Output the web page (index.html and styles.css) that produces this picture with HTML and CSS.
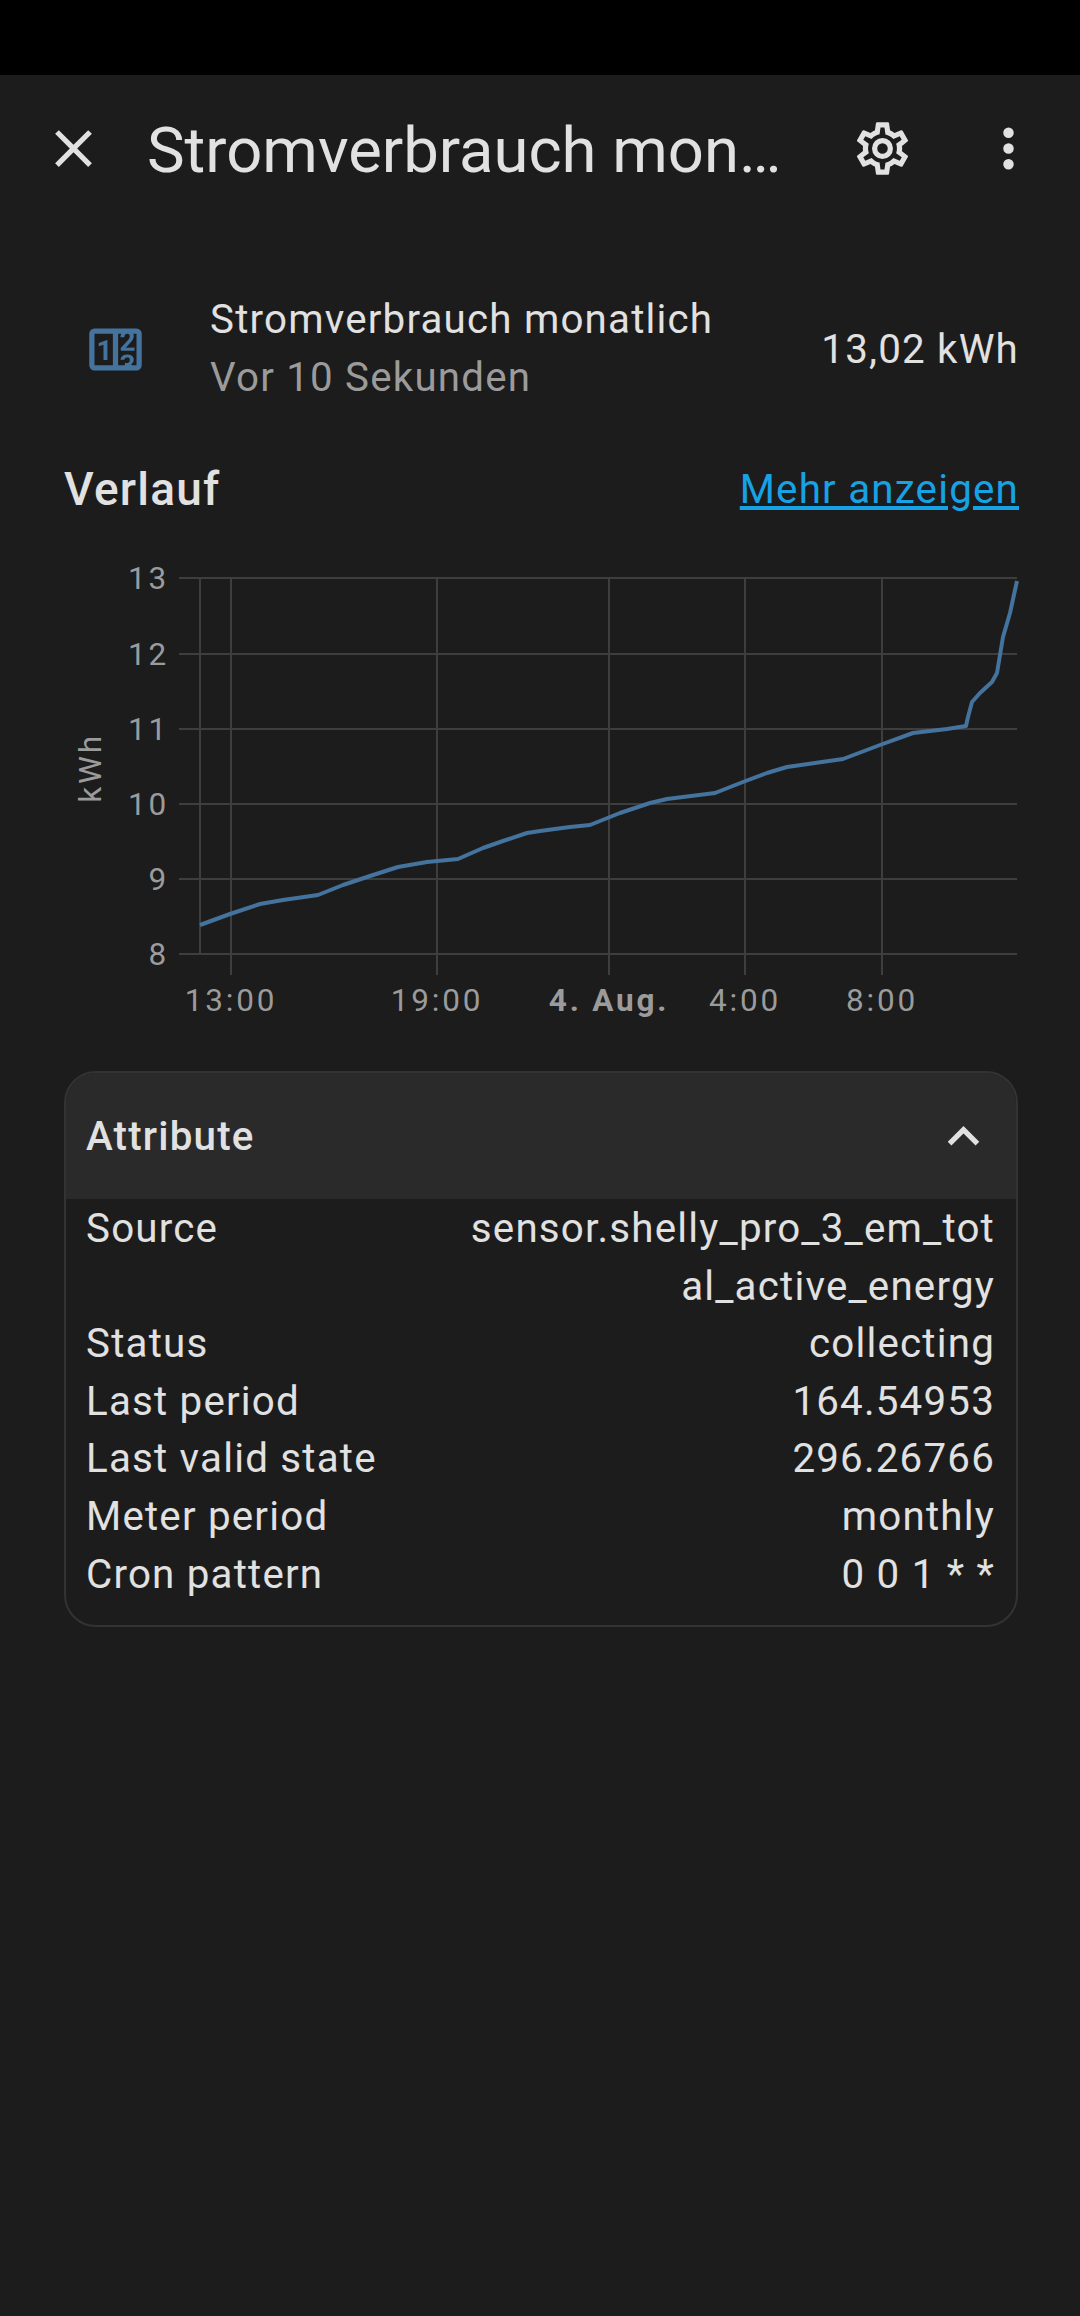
FILE: index.html
```html
<!DOCTYPE html>
<html lang="de">
<head>
<meta charset="utf-8">
<title>Stromverbrauch monatlich</title>
<link rel="stylesheet" href="styles.css">
</head>
<body>
<div class="status-bar"></div>

<header class="toolbar">
  <svg class="icon" viewBox="0 0 24 24"><path d="M19,6.41L17.59,5L12,10.59L6.41,5L5,6.41L10.59,12L5,17.59L6.41,19L12,13.41L17.59,19L19,17.59L13.41,12L19,6.41Z"/></svg>
  <h1 class="toolbar-title">Stromverbrauch monatlich</h1>
  <svg class="icon" viewBox="0 0 24 24"><path d="M12,8A4,4 0 0,1 16,12A4,4 0 0,1 12,16A4,4 0 0,1 8,12A4,4 0 0,1 12,8M12,10A2,2 0 0,0 10,12A2,2 0 0,0 12,14A2,2 0 0,0 14,12A2,2 0 0,0 12,10M10,22C9.75,22 9.54,21.82 9.5,21.58L9.13,18.93C8.5,18.68 7.96,18.34 7.44,17.94L4.95,18.95C4.73,19.03 4.46,18.95 4.34,18.73L2.34,15.27C2.21,15.05 2.27,14.78 2.46,14.63L4.57,12.97L4.5,12L4.57,11L2.46,9.37C2.27,9.22 2.21,8.95 2.34,8.73L4.34,5.27C4.46,5.05 4.73,4.96 4.95,5.05L7.44,6.05C7.96,5.66 8.5,5.32 9.13,5.07L9.5,2.42C9.54,2.18 9.75,2 10,2H14C14.25,2 14.46,2.18 14.5,2.42L14.87,5.07C15.5,5.32 16.04,5.66 16.56,6.05L19.05,5.05C19.27,4.96 19.54,5.05 19.66,5.27L21.66,8.73C21.79,8.95 21.73,9.22 21.54,9.37L19.43,11L19.5,12L19.43,13L21.54,14.63C21.73,14.78 21.79,15.05 21.66,15.27L19.66,18.73C19.54,18.95 19.27,19.04 19.05,18.95L16.56,17.95C16.04,18.34 15.5,18.68 14.87,18.93L14.5,21.58C14.46,21.82 14.25,22 14,22H10M11.25,4L10.88,6.61C9.68,6.86 8.62,7.5 7.85,8.39L5.44,7.35L4.69,8.65L6.8,10.2C6.4,11.37 6.4,12.64 6.8,13.8L4.68,15.36L5.43,16.66L7.86,15.62C8.63,16.5 9.68,17.14 10.87,17.38L11.24,20H12.76L13.13,17.39C14.32,17.14 15.37,16.5 16.14,15.62L18.57,16.66L19.32,15.36L17.2,13.81C17.6,12.64 17.6,11.37 17.2,10.2L19.31,8.65L18.56,7.35L16.15,8.39C15.38,7.5 14.32,6.86 13.12,6.62L12.75,4H11.25Z"/></svg>
  <svg class="icon dots-icon" viewBox="0 0 24 24"><path d="M12,16A2,2 0 0,1 14,18A2,2 0 0,1 12,20A2,2 0 0,1 10,18A2,2 0 0,1 12,16M12,10A2,2 0 0,1 14,12A2,2 0 0,1 12,14A2,2 0 0,1 10,12A2,2 0 0,1 12,10M12,4A2,2 0 0,1 14,6A2,2 0 0,1 12,8A2,2 0 0,1 10,6A2,2 0 0,1 12,4Z"/></svg>
</header>

<main class="content">
  <section class="entity">
    <svg class="icon entity-icon" viewBox="0 0 24 24"><path d="M4,4H20A2,2 0 0,1 22,6V18A2,2 0 0,1 20,20H4A2,2 0 0,1 2,18V6A2,2 0 0,1 4,4M4,6V18H11V6H4M20,18V6H18.76C19,6.54 18.95,7.07 18.95,7.13C18.88,7.8 18.41,8.5 18.24,8.75L15.91,11.3L19.23,11.28L19.24,12.5L14.04,12.47L14,11.47C14,11.47 17.05,8.24 17.2,7.95C17.34,7.67 17.91,6 16.5,6C15.27,6.05 15.41,7.3 15.41,7.3L13.87,7.31C13.87,7.31 13.88,6.65 14.25,6H13V18H15.58L15.57,17.14L16.54,17.13C16.54,17.13 17.45,16.97 17.46,16.08C17.5,15.08 16.65,15.08 16.5,15.08C16.37,15.08 15.43,15.13 15.43,15.95H13.91C13.91,15.95 13.95,13.89 16.5,13.89C19.1,13.89 18.96,15.91 18.96,15.91C18.96,15.91 19,17.16 17.85,17.63L18.37,18H20M8.92,16H7.42V10.2L5.62,10.76V9.53L8.76,8.41H8.92V16Z"/></svg>
    <div class="entity-text">
      <div class="entity-name">Stromverbrauch monatlich</div>
      <div class="entity-time">Vor 10 Sekunden</div>
    </div>
    <div class="entity-value">13,02 kWh</div>
  </section>

  <section class="history-head">
    <h2 class="history-title">Verlauf</h2>
    <a class="history-link" href="#">Mehr anzeigen</a>
  </section>

  <svg class="chart" viewBox="64 540 954 500">
    <g class="grid">
      <path d="M179 578H1017M179 654H1017M179 729H1017M179 804H1017M179 879H1017M179 954H1017"/>
      <path d="M200 578V954M231 578V975M437 578V975M609 578V975M745 578V975M882 578V975"/>
    </g>
    <g class="y-labels">
      <text x="169" y="589">13</text>
      <text x="169" y="665">12</text>
      <text x="169" y="740">11</text>
      <text x="169" y="815">10</text>
      <text x="169" y="890">9</text>
      <text x="169" y="965">8</text>
    </g>
    <text class="y-unit" transform="translate(101 768) rotate(-90)">kWh</text>
    <g class="x-labels">
      <text x="231" y="1011">13:00</text>
      <text x="437" y="1011">19:00</text>
      <text class="x-day" x="609" y="1011">4. Aug.</text>
      <text x="745" y="1011">4:00</text>
      <text x="882" y="1011">8:00</text>
    </g>
    <polyline class="chart-line" points="200,925 230,914 260,904 283,900 318,895 343,885 370,876 398,867 427,862 458,859 483,848 503,841 527,833 540,831 570,827 590,825 620,813 650,803 667,799 715,793 743,782 767,773 787,767 843,759 880,745 913,733 947,729 966,726 968,717 972,702 980,693 992,682 997,673 1003,637 1010,613 1017,581"/>
  </svg>

  <section class="attributes">
    <div class="attributes-head">
      <span>Attribute</span>
      <svg class="icon" viewBox="0 0 24 24"><path d="M7.41,15.41L12,10.83L16.59,15.41L18,14L12,8L6,14L7.41,15.41Z"/></svg>
    </div>
    <div class="attributes-body">
      <div class="attr-row"><span>Source</span><span class="attr-value">sensor.shelly_pro_3_em_total_active_energy</span></div>
      <div class="attr-row"><span>Status</span><span class="attr-value">collecting</span></div>
      <div class="attr-row"><span>Last period</span><span class="attr-value">164.54953</span></div>
      <div class="attr-row"><span>Last valid state</span><span class="attr-value">296.26766</span></div>
      <div class="attr-row"><span>Meter period</span><span class="attr-value">monthly</span></div>
      <div class="attr-row"><span>Cron pattern</span><span class="attr-value">0 0 1 * *</span></div>
    </div>
  </section>
</main>
</body>
</html>
```

FILE: styles.css
```css
* {
  box-sizing: border-box;
}

body {
  margin: 0;
  min-height: 100vh;
  background-color: #1c1c1c;
  color: #e1e1e1;
  font-family: Roboto, "Noto Sans", sans-serif;
}

.status-bar {
  height: 75px;
  background-color: #000;
}

.icon {
  display: block;
  flex: none;
  width: 63px;
  height: 63px;
  fill: #e1e1e1;
}

.toolbar {
  display: flex;
  align-items: center;
  gap: 62px;
  height: 146px;
  padding: 0 40px 0 42px;
}

.toolbar-title {
  flex: none;
  width: 642px;
  margin: 4px 0 0 -20px;
  font-size: 63.36px;
  font-weight: 400;
  line-height: 70px;
  white-space: nowrap;
  overflow: hidden;
  text-overflow: ellipsis;
}

.dots-icon {
  margin-left: 1px;
}

.content {
  padding: 0 62px 0 64px;
}

.entity {
  display: flex;
  align-items: center;
  margin-top: 73px;
  padding-left: 20px;
}

.entity-text {
  flex: 1;
  margin-left: 63px;
}

.entity-name,
.entity-time,
.entity-value,
.history-link,
.attributes-head,
.attr-row {
  font-size: 40.3px;
  letter-spacing: 1.2px;
}

.entity-name,
.entity-time {
  line-height: 52px;
}

.entity-time {
  margin-top: 6px;
  color: #9b9b9b;
}

.entity-value,
.history-link {
  margin-right: -1px;
}

.history-head {
  display: flex;
  align-items: center;
  justify-content: space-between;
  margin-top: 57px;
}

.history-title {
  margin: 0;
  font-size: 46px;
  font-weight: 500;
  line-height: 56px;
  letter-spacing: 1.2px;
}

.history-link {
  color: #17a2e5;
}

.chart {
  display: block;
  width: 954px;
  height: 500px;
  margin-top: 23px;
  overflow: visible;
}

.grid path {
  fill: none;
  stroke: #3e3e3e;
  stroke-width: 2;
}

.chart text {
  fill: #9b9b9b;
  font-size: 31.5px;
  letter-spacing: 2.8px;
}

.y-labels text {
  text-anchor: end;
}

.y-unit,
.x-labels text {
  text-anchor: middle;
}

.x-labels .x-day {
  font-weight: 700;
}

.chart-line {
  fill: none;
  stroke: #44739e;
  stroke-width: 4;
  stroke-linejoin: round;
}

.entity-icon {
  fill: #44739e;
}

.attributes {
  width: 954px;
  margin-top: 31px;
  border: 2px solid #333;
  border-radius: 32px;
  overflow: hidden;
}

.attributes-head {
  display: flex;
  align-items: center;
  justify-content: space-between;
  height: 126px;
  padding: 0 21px 0 20px;
  background-color: #2a2a2a;
  font-weight: 500;
}

.attributes-body {
  padding: 1px 21px 22px 20px;
}

.attr-row {
  display: flex;
  justify-content: space-between;
  line-height: 57.6px;
}

.attr-value {
  max-width: 58%;
  text-align: right;
  word-break: break-all;
}
```
